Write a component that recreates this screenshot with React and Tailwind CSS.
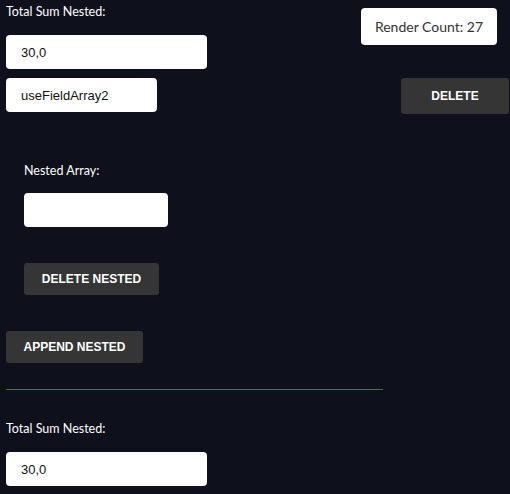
import { useState } from "react";

function Label({ children, className = "" }) {
  return (
    <p className={`font-['Lato',sans-serif] font-normal text-[12.5px] leading-4 text-white ${className}`}>
      {children}
    </p>
  );
}

function Field({ value, width, className = "" }) {
  return (
    <input
      readOnly
      value={value}
      className={`block h-[34px] rounded-[4px] bg-white pl-[15px] text-[13px] text-[#111] font-['Liberation_Sans',Arial,sans-serif] outline-none ${width} ${className}`}
    />
  );
}

function Btn({ children, className = "" }) {
  return (
    <button className={`rounded-[3px] bg-[#353535] font-['Liberation_Sans',Arial,sans-serif] text-[12px] font-bold uppercase text-white ${className}`}>
      {children}
    </button>
  );
}

export default function App() {
  const [count] = useState(27);

  return (
    <div className="relative min-h-screen bg-[#0e101b] px-[6px] pt-[4px] pb-4">
      {/* render counter */}
      <div className="absolute right-[13px] top-[8px] flex h-[37px] w-[136px] items-center justify-center rounded-[4px] bg-white font-['Lato',sans-serif] text-[14px] text-[#333]">
        Render Count: {count}
      </div>

      <Label>Total Sum Nested:</Label>
      <Field value="30,0" width="w-[201px]" className="mt-[15px]" />

      <div className="mt-[9px] flex items-start">
        <Field value="useFieldArray2" width="w-[151px]" />
        <Btn className="ml-auto mr-[-5px] h-[36px] w-[108px]">Delete</Btn>
      </div>

      {/* nested */}
      <div className="pl-[18px]">
        <Label className="mt-[49px]">Nested Array:</Label>
        <Field value="" width="w-[144px]" className="mt-[14px]" />
        <Btn className="mt-[36px] h-[32px] w-[135px]">Delete Nested</Btn>
      </div>

      <Btn className="mt-[36px] block h-[32px] w-[137px]">Append Nested</Btn>

      <div className="mt-[26px] h-px w-[377px] bg-[#4f62a0]" />

      <Label className="mt-[31px]">Total Sum Nested:</Label>
      <Field value="30,0" width="w-[201px]" className="mt-[15px]" />
    </div>
  );
}
